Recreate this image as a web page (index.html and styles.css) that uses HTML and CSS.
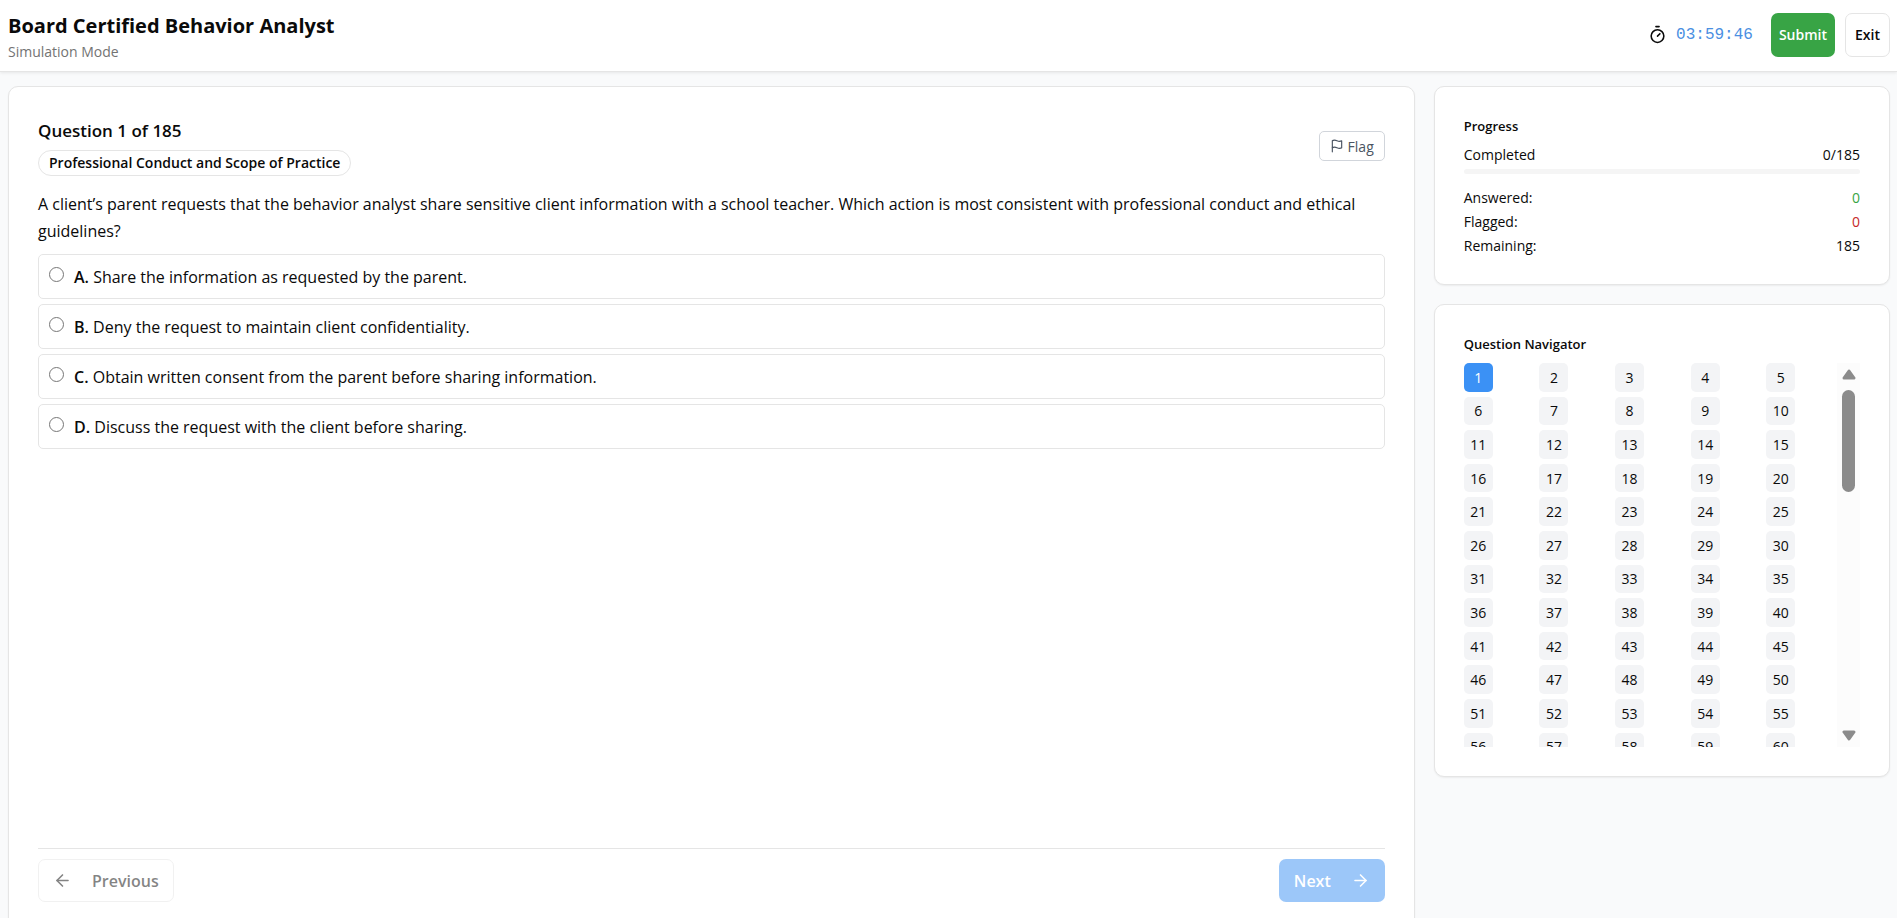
FILE: index.html
```html
<!DOCTYPE html>
<html lang="en">
<head>
    <meta charset="UTF-8">
    <meta name="viewport" content="width=device-width, initial-scale=1.0">
    <title>Board Certified Behavior Analyst</title>
    <link rel="stylesheet" href="styles.css">
</head>
<body>
    <header class="topbar">
        <div>
            <h1>Board Certified Behavior Analyst</h1>
            <p class="mode">Simulation Mode</p>
        </div>
        <div class="topbar-actions">
            <div class="timer">
                <svg class="timer-icon" viewBox="0 0 24 24" fill="none" stroke="currentColor" stroke-width="2" stroke-linecap="round" stroke-linejoin="round">
                    <line x1="10" x2="14" y1="2" y2="2"/>
                    <line x1="12" x2="15" y1="14" y2="11"/>
                    <circle cx="12" cy="14" r="8"/>
                </svg>
                <span class="time">03:59:46</span>
            </div>
            <button type="button" class="btn btn-submit">Submit</button>
            <button type="button" class="btn btn-exit">Exit</button>
        </div>
    </header>

    <main class="layout">
        <section class="card question">
            <div class="question-head">
                <div>
                    <h2>Question 1 of 185</h2>
                    <span class="badge">Professional Conduct and Scope of Practice</span>
                </div>
                <button type="button" class="btn-flag">
                    <svg viewBox="0 0 24 24" fill="none" stroke="currentColor" stroke-width="2" stroke-linecap="round" stroke-linejoin="round">
                        <path d="M4 15s1-1 4-1 5 2 8 2 4-1 4-1V3s-1 1-4 1-5-2-8-2-4 1-4 1z"/>
                        <line x1="4" x2="4" y1="22" y2="15"/>
                    </svg>
                    Flag
                </button>
            </div>

            <p class="question-text">A client’s parent requests that the behavior analyst share sensitive client information with a school teacher. Which action is most consistent with professional conduct and ethical guidelines?</p>

            <div class="options">
                <label class="option">
                    <input type="radio" name="answer" value="A">
                    <span><strong>A.</strong> Share the information as requested by the parent.</span>
                </label>
                <label class="option">
                    <input type="radio" name="answer" value="B">
                    <span><strong>B.</strong> Deny the request to maintain client confidentiality.</span>
                </label>
                <label class="option">
                    <input type="radio" name="answer" value="C">
                    <span><strong>C.</strong> Obtain written consent from the parent before sharing information.</span>
                </label>
                <label class="option">
                    <input type="radio" name="answer" value="D">
                    <span><strong>D.</strong> Discuss the request with the client before sharing.</span>
                </label>
            </div>

            <div class="question-footer">
                <button type="button" class="btn-nav btn-prev" disabled>
                    <svg viewBox="0 0 24 24" fill="none" stroke="currentColor" stroke-width="2" stroke-linecap="round" stroke-linejoin="round">
                        <path d="m12 19-7-7 7-7"/>
                        <path d="M19 12H5"/>
                    </svg>
                    Previous
                </button>
                <button type="button" class="btn-nav btn-next" disabled>
                    Next
                    <svg viewBox="0 0 24 24" fill="none" stroke="currentColor" stroke-width="2" stroke-linecap="round" stroke-linejoin="round">
                        <path d="M5 12h14"/>
                        <path d="m12 5 7 7-7 7"/>
                    </svg>
                </button>
            </div>
        </section>

        <aside class="sidebar">
            <section class="card">
                <h3>Progress</h3>
                <div class="row"><span>Completed</span><span>0/185</span></div>
                <div class="bar"></div>
                <div class="stats">
                    <div class="row"><span>Answered:</span><span class="green">0</span></div>
                    <div class="row"><span>Flagged:</span><span class="red">0</span></div>
                    <div class="row"><span>Remaining:</span><span>185</span></div>
                </div>
            </section>

            <section class="card">
                <h3>Question Navigator</h3>
                <div class="navigator">
                    <div class="nav-scroll" id="navScroll">
                        <div class="nav-grid" id="navGrid"></div>
                    </div>
                    <div class="scrollbar">
                        <svg class="arrow" viewBox="0 0 14 11"><path d="M7 2 12 9H2z"/></svg>
                        <div class="track">
                            <div class="thumb" id="thumb"></div>
                        </div>
                        <svg class="arrow" viewBox="0 0 14 11"><path d="M7 9 2 2h10z"/></svg>
                    </div>
                </div>
            </section>
        </aside>
    </main>

    <script>
        const total = 185;
        const grid = document.getElementById('navGrid');
        const scroller = document.getElementById('navScroll');
        const thumb = document.getElementById('thumb');

        for (let i = 1; i <= total; i++) {
            const button = document.createElement('button');
            button.type = 'button';
            button.className = i === 1 ? 'nav-item current' : 'nav-item';
            button.textContent = i;
            grid.appendChild(button);
        }

        function updateThumb() {
            thumb.style.height = (scroller.clientHeight / scroller.scrollHeight * 100) + '%';
            thumb.style.marginTop = (scroller.scrollTop / scroller.scrollHeight * thumb.parentNode.clientHeight) + 'px';
        }

        scroller.addEventListener('scroll', updateThumb);
        updateThumb();
    </script>
</body>
</html>
```
FILE: styles.css
```css
* {
    box-sizing: border-box;
}
body {
    margin: 0;
    background-color: #f9fafb;
    font-family: 'Segoe UI', 'Open Sans', 'Noto Sans', sans-serif;
    font-size: 14px;
    line-height: 20px;
    color: #0a0a0a;
}
h1, h2, h3, p {
    margin: 0;
}
button {
    font-family: inherit;
    cursor: pointer;
}

/* Header */
.topbar {
    display: flex;
    justify-content: space-between;
    align-items: center;
    height: 72px;
    padding: 0 7px 0 8px;
    background-color: #fff;
    border-bottom: 1px solid #e5e5e5;
    box-shadow: 0 1px 3px rgba(0, 0, 0, 0.08);
}
h1 {
    padding-top: 4px;
    font-size: 20px;
    font-weight: 700;
    line-height: 28px;
}
.mode {
    line-height: 24px;
    color: #737373;
}
.topbar-actions {
    display: flex;
    align-items: center;
    gap: 10px;
    padding-bottom: 2px;
}
.timer {
    display: flex;
    align-items: center;
    gap: 9px;
    margin-right: 8px;
}
.timer-icon {
    width: 19px;
    height: 19px;
}
.time {
    font-family: 'Liberation Mono', monospace;
    font-size: 16px;
    color: #4a8fe2;
}
.btn {
    height: 44px;
    border: 1px solid transparent;
    border-radius: 7px;
    font-size: 14px;
    font-weight: 600;
}
.btn-submit {
    padding: 0 7px;
    background-color: #38a445;
    color: #fff;
}
.btn-exit {
    padding: 0 9px;
    background-color: #fff;
    border-color: #e5e5e5;
    color: #0a0a0a;
}

/* Page */
.layout {
    display: grid;
    grid-template-columns: repeat(4, 1fr);
    align-items: start;
    gap: 19px;
    padding: 14px 7px 14px 8px;
}
.card {
    padding: 29px;
    background-color: #fff;
    border: 1px solid #e5e5e5;
    border-radius: 10px;
    box-shadow: 0 1px 2px rgba(0, 0, 0, 0.06);
}
.question {
    grid-column: span 3;
    display: flex;
    flex-direction: column;
    min-height: calc(100vh - 72px);
}
.question-head {
    display: flex;
    justify-content: space-between;
    align-items: center;
}
h2 {
    font-size: 17px;
    font-weight: 600;
    line-height: 30px;
}
.badge {
    display: inline-block;
    margin-top: 4px;
    padding: 0 10px;
    border: 1px solid #e5e5e5;
    border-radius: 13px;
    font-weight: 600;
    line-height: 24px;
}
.btn-flag {
    display: flex;
    align-items: center;
    gap: 4px;
    height: 30px;
    padding: 0 10px;
    background-color: #fff;
    border: 1px solid #d1d5db;
    border-radius: 5px;
    font-size: 14px;
    color: #4b5563;
}
.btn-flag svg {
    width: 14px;
    height: 14px;
}
.question-text {
    margin-top: 15px;
    font-size: 16px;
    line-height: 27px;
}
.options {
    display: flex;
    flex-direction: column;
    gap: 5px;
    margin-top: 9px;
}
.option {
    display: flex;
    align-items: flex-start;
    gap: 10px;
    padding: 9px 10px 7px;
    border: 1px solid #e5e5e5;
    border-radius: 5px;
    font-size: 16px;
    line-height: 27px;
    cursor: pointer;
}
.option input {
    width: 15px;
    height: 15px;
    margin: 3px 0 0;
}
.option strong {
    font-weight: 600;
}
.question-footer {
    display: flex;
    justify-content: space-between;
    margin-top: auto;
    padding-top: 10px;
    border-top: 1px solid #e5e5e5;
}
.btn-nav {
    display: flex;
    align-items: center;
    gap: 20px;
    height: 43px;
    padding: 0 14px;
    border: 1px solid transparent;
    border-radius: 7px;
    font-size: 16px;
    font-weight: 600;
    opacity: 0.5;
}
.btn-nav svg {
    width: 19px;
    height: 19px;
}
.btn-prev {
    background-color: #fff;
    border-color: #e5e5e5;
    color: #0a0a0a;
}
.btn-next {
    background-color: #3b91f5;
    color: #fff;
}

/* Sidebar */
.sidebar {
    display: flex;
    flex-direction: column;
    gap: 19px;
}
h3 {
    margin-bottom: 9px;
    font-size: 13px;
    font-weight: 600;
    line-height: 20px;
}
.row {
    display: flex;
    justify-content: space-between;
}
.bar {
    height: 5px;
    margin: 4px 0 14px;
    border-radius: 3px;
    background-color: #f5f5f5;
}
.stats {
    display: flex;
    flex-direction: column;
    gap: 4px;
    margin-bottom: -1px;
}
.green {
    color: #38a445;
}
.red {
    color: #c62828;
}
.navigator {
    display: flex;
    height: 384px;
}
.nav-scroll {
    flex: 1;
    overflow-y: scroll;
    scrollbar-width: none;
}
.nav-grid {
    display: grid;
    grid-template-columns: repeat(5, 1fr);
    grid-auto-rows: 1fr;
    gap: 5px;
    height: 1238px;
}
.nav-item {
    width: 29px;
    padding: 1px 0 0;
    border: none;
    border-radius: 5px;
    background-color: #f3f4f6;
    font-size: 14px;
    line-height: 20px;
    color: #0a0a0a;
}
.nav-item.current {
    background-color: #3b91f5;
    color: #fff;
}

/* Scrollbar */
.scrollbar {
    display: flex;
    flex-direction: column;
    align-items: center;
    gap: 10px;
    width: 23px;
    padding: 6px 0;
    background-color: #fcfcfc;
}
.arrow {
    width: 14px;
    height: 11px;
    fill: #8b8b8b;
    stroke: #8b8b8b;
    stroke-width: 3;
    stroke-linejoin: round;
}
.track {
    flex: 1;
    width: 13px;
}
.thumb {
    border-radius: 7px;
    background-color: #8b8b8b;
}
```
